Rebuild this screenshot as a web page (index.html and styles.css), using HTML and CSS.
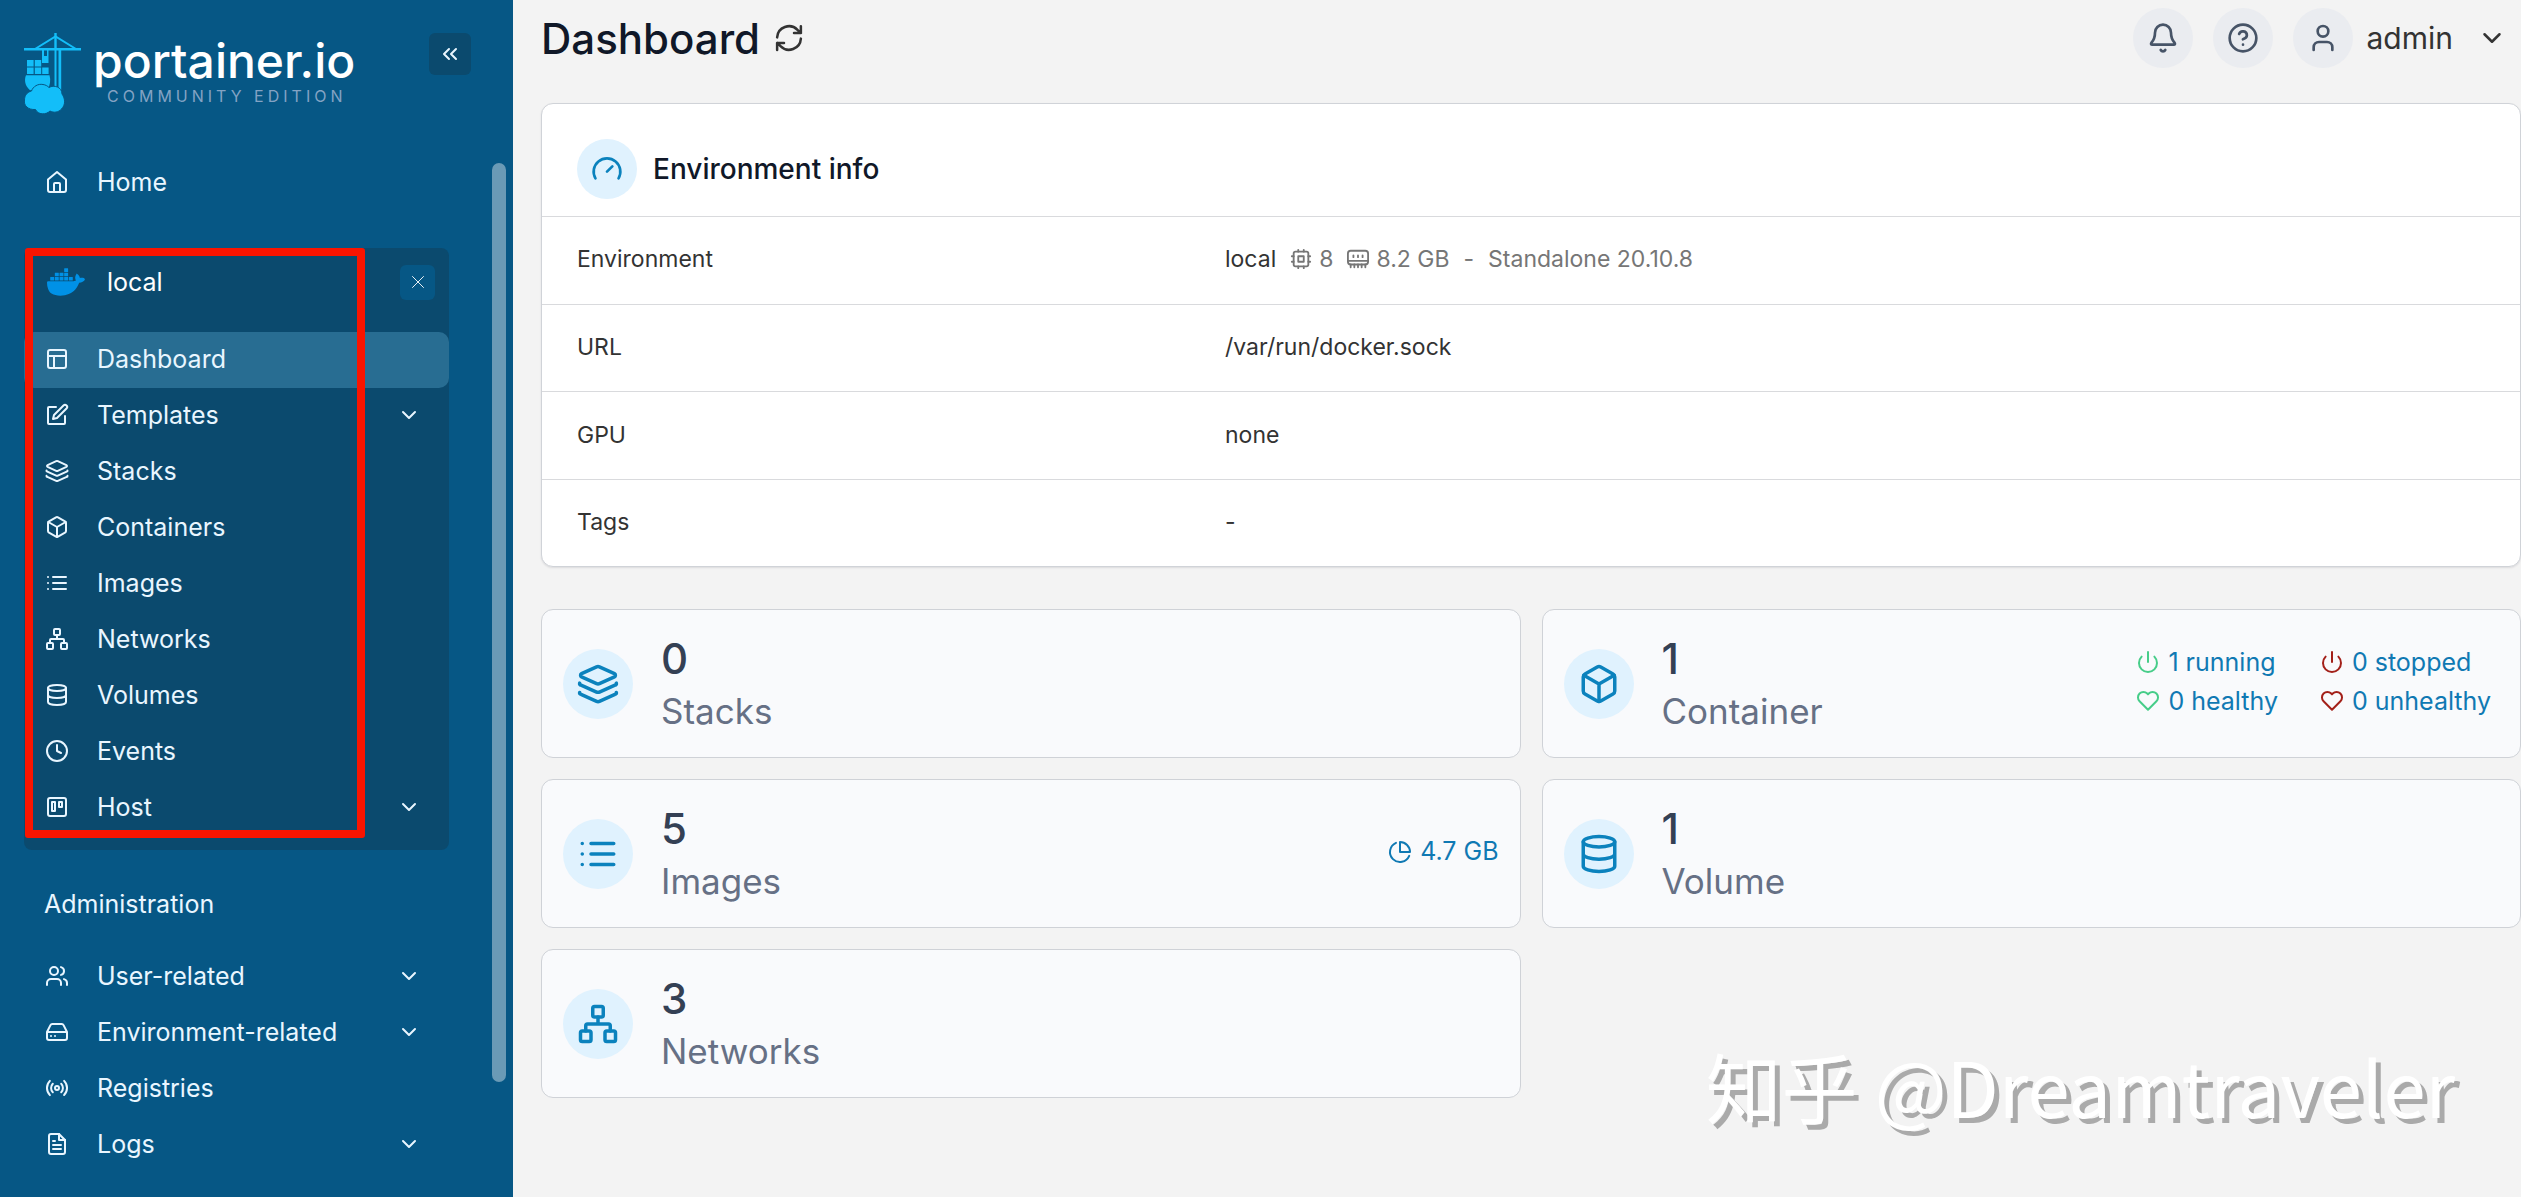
FILE: index.html
```html
<!DOCTYPE html>
<html lang="en">
<head>
<meta charset="utf-8">
<meta name="viewport" content="width=device-width, initial-scale=1">
<title>Portainer</title>
<link rel="stylesheet" href="styles.css">
</head>
<body>

<!-- icon set -->
<svg class="sprite" aria-hidden="true">
  <symbol id="home" viewBox="0 0 24 24"><path d="M3 9.5 12 2l9 7.5V20a2 2 0 0 1-2 2H5a2 2 0 0 1-2-2z"/><path d="M9 22v-8a1 1 0 0 1 1-1h4a1 1 0 0 1 1 1v8"/></symbol>
  <symbol id="layout" viewBox="0 0 24 24"><rect x="3" y="3" width="18" height="18" rx="2"/><path d="M3 9h18M9 21V9"/></symbol>
  <symbol id="edit" viewBox="0 0 24 24"><path d="M11 4H4a1 1 0 0 0-1 1v15a1 1 0 0 0 1 1h15a1 1 0 0 0 1-1v-7"/><path d="M18.5 2.5a2.12 2.12 0 0 1 3 3L12 15l-4 1 1-4z"/></symbol>
  <symbol id="layers" viewBox="0 0 24 24"><path d="M12.8 2.2a2 2 0 0 0-1.6 0L2.6 6.1a1 1 0 0 0 0 1.8l8.6 3.9a2 2 0 0 0 1.6 0l8.6-3.9a1 1 0 0 0 0-1.8z"/><path d="M1.5 11.5a1 1 0 0 0 .8 1.1l8.9 4a2 2 0 0 0 1.6 0l8.9-4a1 1 0 0 0 .8-1.1"/><path d="M1.5 16.8a1 1 0 0 0 .8 1.1l8.9 4a2 2 0 0 0 1.6 0l8.9-4a1 1 0 0 0 .8-1.1"/></symbol>
  <symbol id="box" viewBox="0 0 24 24"><path d="M21 16V8a2 2 0 0 0-1-1.73l-7-4a2 2 0 0 0-2 0l-7 4A2 2 0 0 0 3 8v8a2 2 0 0 0 1 1.73l7 4a2 2 0 0 0 2 0l7-4A2 2 0 0 0 21 16z"/><path d="M3.3 7 12 12l8.7-5M12 22V12"/></symbol>
  <symbol id="list" viewBox="0 0 24 24"><path d="M8 6h13M8 12h13M8 18h13M3 6h.01M3 12h.01M3 18h.01"/></symbol>
  <symbol id="network" viewBox="0 0 24 24"><rect x="16" y="16" width="6" height="6" rx="1"/><rect x="2" y="16" width="6" height="6" rx="1"/><rect x="9" y="2" width="6" height="6" rx="1"/><path d="M5 16v-3a1 1 0 0 1 1-1h12a1 1 0 0 1 1 1v3M12 12V8"/></symbol>
  <symbol id="database" viewBox="0 0 24 24"><ellipse cx="12" cy="5" rx="9" ry="3"/><path d="M3 5v14c0 1.66 4 3 9 3s9-1.34 9-3V5M3 12c0 1.66 4 3 9 3s9-1.34 9-3"/></symbol>
  <symbol id="clock" viewBox="0 0 24 24"><circle cx="12" cy="12" r="10"/><path d="M12 6v6l4 2"/></symbol>
  <symbol id="host" viewBox="0 0 24 24"><rect x="3" y="3" width="18" height="18" rx="2"/><path d="M7 7h3v9H7zM14 7h3v5h-3z"/></symbol>
  <symbol id="users" viewBox="0 0 24 24"><path d="M16 21v-2a4 4 0 0 0-4-4H6a4 4 0 0 0-4 4v2"/><circle cx="9" cy="7" r="4"/><path d="M22 21v-2a4 4 0 0 0-3-3.87M16 3.13a4 4 0 0 1 0 7.75"/></symbol>
  <symbol id="drive" viewBox="0 0 24 24"><path d="M22 12H2M5.45 5.11 2 12v6a2 2 0 0 0 2 2h16a2 2 0 0 0 2-2v-6l-3.45-6.89A2 2 0 0 0 16.76 4H7.24a2 2 0 0 0-1.79 1.11zM6 16h.01M10 16h.01"/></symbol>
  <symbol id="radio" viewBox="0 0 24 24"><path d="M4.9 19.1C1 15.2 1 8.8 4.9 4.9M7.8 16.2c-2.3-2.3-2.3-6.1 0-8.5M16.2 7.8c2.3 2.3 2.3 6.1 0 8.5M19.1 4.9C23 8.8 23 15.1 19.1 19"/><circle cx="12" cy="12" r="2"/></symbol>
  <symbol id="file" viewBox="0 0 24 24"><path d="M14 2H6a2 2 0 0 0-2 2v16a2 2 0 0 0 2 2h12a2 2 0 0 0 2-2V8z"/><path d="M14 2v6h6M16 13H8M16 17H8M10 9H8"/></symbol>
  <symbol id="down" viewBox="0 0 24 24"><path d="m6 9 6 6 6-6"/></symbol>
  <symbol id="collapse" viewBox="0 0 24 24"><path d="m11 17-5-5 5-5M18 17l-5-5 5-5"/></symbol>
  <symbol id="close" viewBox="0 0 24 24"><path d="M18 6 6 18M6 6l12 12"/></symbol>
  <symbol id="refresh" viewBox="0 0 24 24"><path d="M2.5 11.5A9.5 9.5 0 0 1 18.8 5.5L21.5 8M21.5 2.5V8H16M21.5 12.5A9.5 9.5 0 0 1 5.2 18.5L2.5 16M2.5 21.5V16H8"/></symbol>
  <symbol id="bell" viewBox="0 0 24 24"><path d="M6 8a6 6 0 0 1 12 0c0 3.500 1 5.500 2.600 7.500.7.900.4 1.500-.6 1.500H4c-1 0-1.300-.6-.6-1.500C5 13.500 6 11.500 6 8M10.300 21a1.940 1.940 0 0 0 3.400 0"/></symbol>
  <symbol id="help" viewBox="0 0 24 24"><circle cx="12" cy="12" r="10"/><path d="M9.090 9a3 3 0 0 1 5.830 1c0 2-3 3-3 3M12 17h.01"/></symbol>
  <symbol id="user" viewBox="0 0 24 24"><path d="M19 21v-2a4 4 0 0 0-4-4H9a4 4 0 0 0-4 4v2"/><circle cx="12" cy="7" r="4"/></symbol>
  <symbol id="gauge" viewBox="0 0 24 24"><path d="m12 14 4-4M3.340 19a10 10 0 1 1 17.320 0"/></symbol>
  <symbol id="cpu" viewBox="0 0 24 24"><rect x="4" y="4" width="16" height="16" rx="2"/><rect x="9" y="9" width="6" height="6"/><path d="M15 2v2M15 20v2M2 15h2M2 9h2M20 15h2M20 9h2M9 2v2M9 20v2"/></symbol>
  <symbol id="memory" viewBox="0 0 24 24"><rect x="1" y="3" width="22" height="15" rx="3"/><path d="M1 14h22M4 18v3M8 18v3M12 18v3M16 18v3M20 18v3M7 8v2M12 8v2M17 8v2"/></symbol>
  <symbol id="power" viewBox="0 0 24 24"><path d="M18.360 6.640a9 9 0 1 1-12.730 0M12 2v10"/></symbol>
  <symbol id="heart" viewBox="0 0 24 24"><path d="M20.420 4.580a5.400 5.400 0 0 0-7.650 0L12 5.350l-.770-.770a5.400 5.400 0 0 0-7.650 7.650L12 20.670l8.420-8.440a5.400 5.400 0 0 0 0-7.650z"/></symbol>
  <symbol id="pie" viewBox="0 0 24 24"><path d="M21.210 15.890A10 10 0 1 1 8 2.830M22 12A10 10 0 0 0 12 2v10z"/></symbol>
</svg>

<div class="page">

  <aside class="sidebar">
    <div class="brand">
      <svg class="crane" viewBox="0 0 57 81" aria-hidden="true">
        <path d="M0 15h57v2.500H0zM30.300 0h2.400v17h-2.400z"/>
        <path class="line" d="M11 16 31.500 3.500 52 16"/>
        <path d="M30.500 17h2v40h-2zM34.500 17h2.700v40h-2.700zM18 17h2v6h3v-6h1.500v13H18z"/>
        <path d="M3 27h6.600v6.500H3zM10.800 27h6.400v6.500h-6.400zM3 34.500h6.600V41H3zM10.800 34.500h6.400V41h-6.400zM18.200 34.500h6.400V41h-6.400z"/>
        <path d="M2 42.200h23.500c1.500 5 .5 10-2 15H6C1 53 0 47 2 42.200z"/>
        <path class="cloud" d="M7.500 58C9 53.500 14 50.500 19 51.500c2.500.3 4.500 1.500 6 3C30 51.500 38 54 38 61c3.500 5 3.500 11-.5 15-3 3.500-8 4-11.500 2-4 4-12 4-14.500-1.500C4 77-.5 72.500.5 67 .5 62 3.500 59 7.500 58z"/>
      </svg>
      <div class="brand-text">
        <span class="brand-name">portainer.io</span>
        <span class="brand-edition">COMMUNITY EDITION</span>
      </div>
      <button class="collapse" aria-label="Collapse sidebar"><svg class="icon"><use href="#collapse"/></svg></button>
    </div>

    <nav>
      <a class="nav-item" href="#"><svg class="icon"><use href="#home"/></svg>Home</a>

      <div class="env">
        <div class="env-title">
          <svg class="whale" viewBox="0 3 24 18" aria-hidden="true"><path d="M13.983 11.078h2.119a.186.186 0 00.186-.185V9.006a.186.186 0 00-.186-.186h-2.119a.185.185 0 00-.185.185v1.888c0 .102.083.185.185.185m-2.954-5.430h2.118a.186.186 0 00.186-.186V3.574a.186.186 0 00-.186-.185h-2.118a.185.185 0 00-.185.185v1.888c0 .102.082.185.185.185m0 2.716h2.118a.187.187 0 00.186-.186V6.290a.186.186 0 00-.186-.185h-2.118a.185.185 0 00-.185.185v1.887c0 .102.082.185.185.186m-2.930 0h2.120a.186.186 0 00.184-.186V6.290a.185.185 0 00-.185-.185H8.100a.185.185 0 00-.185.185v1.887c0 .102.083.185.185.186m-2.964 0h2.119a.186.186 0 00.185-.186V6.290a.185.185 0 00-.185-.185H5.136a.186.186 0 00-.186.185v1.887c0 .102.084.185.186.186m5.893 2.715h2.118a.186.186 0 00.186-.185V9.006a.186.186 0 00-.186-.186h-2.118a.185.185 0 00-.185.185v1.888c0 .102.082.185.185.185m-2.930 0h2.120a.185.185 0 00.184-.185V9.006a.185.185 0 00-.184-.186h-2.120a.185.185 0 00-.184.185v1.888c0 .102.083.185.185.185m-2.964 0h2.119a.185.185 0 00.185-.185V9.006a.185.185 0 00-.184-.186h-2.120a.186.186 0 00-.186.186v1.887c0 .102.084.185.186.185m-2.920 0h2.120a.185.185 0 00.184-.185V9.006a.185.185 0 00-.184-.186h-2.120a.185.185 0 00-.184.185v1.888c0 .102.083.185.185.185M23.763 9.890c-.065-.051-.672-.510-1.954-.510-.338.001-.676.030-1.010.087-.248-1.700-1.653-2.530-1.716-2.566l-.344-.199-.226.327c-.284.438-.490.922-.612 1.430-.230.970-.090 1.882.403 2.661-.595.332-1.550.413-1.744.420H.751a.751.751 0 00-.750.748 11.376 11.376 0 00.692 4.062c.545 1.428 1.355 2.480 2.410 3.124 1.180.723 3.100 1.137 5.275 1.137.983.003 1.963-.086 2.930-.266a12.248 12.248 0 003.823-1.389c.980-.567 1.860-1.288 2.610-2.136 1.252-1.418 1.998-2.997 2.553-4.400h.221c1.372 0 2.215-.549 2.680-1.009.309-.293.550-.650.707-1.046l.098-.288z"/></svg>
          <span>local</span>
          <button class="env-close" aria-label="Close environment"><svg class="icon"><use href="#close"/></svg></button>
        </div>
        <a class="nav-item active" href="#"><svg class="icon"><use href="#layout"/></svg>Dashboard</a>
        <button class="nav-item"><svg class="icon"><use href="#edit"/></svg>Templates<svg class="icon arrow"><use href="#down"/></svg></button>
        <a class="nav-item" href="#"><svg class="icon"><use href="#layers"/></svg>Stacks</a>
        <a class="nav-item" href="#"><svg class="icon"><use href="#box"/></svg>Containers</a>
        <a class="nav-item" href="#"><svg class="icon"><use href="#list"/></svg>Images</a>
        <a class="nav-item" href="#"><svg class="icon"><use href="#network"/></svg>Networks</a>
        <a class="nav-item" href="#"><svg class="icon"><use href="#database"/></svg>Volumes</a>
        <a class="nav-item" href="#"><svg class="icon"><use href="#clock"/></svg>Events</a>
        <button class="nav-item"><svg class="icon"><use href="#host"/></svg>Host<svg class="icon arrow"><use href="#down"/></svg></button>
        <div class="highlight"></div>
      </div>

      <h2 class="nav-heading">Administration</h2>
      <button class="nav-item"><svg class="icon"><use href="#users"/></svg>User-related<svg class="icon arrow"><use href="#down"/></svg></button>
      <button class="nav-item"><svg class="icon"><use href="#drive"/></svg>Environment-related<svg class="icon arrow"><use href="#down"/></svg></button>
      <a class="nav-item" href="#"><svg class="icon"><use href="#radio"/></svg>Registries</a>
      <button class="nav-item"><svg class="icon"><use href="#file"/></svg>Logs<svg class="icon arrow"><use href="#down"/></svg></button>
    </nav>
    <div class="scroll-thumb"></div>
  </aside>

  <main>
    <header class="topbar">
      <h1>Dashboard</h1>
      <button class="refresh" aria-label="Refresh"><svg class="icon"><use href="#refresh"/></svg></button>
      <div class="top-actions">
        <button class="round" aria-label="Notifications"><svg class="icon"><use href="#bell"/></svg></button>
        <button class="round" aria-label="Help"><svg class="icon"><use href="#help"/></svg></button>
        <button class="user-menu">
          <span class="round"><svg class="icon"><use href="#user"/></svg></span>
          admin
          <svg class="icon user-arrow"><use href="#down"/></svg>
        </button>
      </div>
    </header>

    <section class="widget">
      <div class="widget-header">
        <span class="widget-icon"><svg class="icon"><use href="#gauge"/></svg></span>
        <h2>Environment info</h2>
      </div>
      <table>
        <tr>
          <th scope="row">Environment</th>
          <td>
            <div class="env-info">
              <span>local</span>
              <span class="spec"><svg class="icon"><use href="#cpu"/></svg>8</span>
              <span class="spec"><svg class="icon"><use href="#memory"/></svg>8.2 GB</span>
              <span class="spec">-</span>
              <span class="spec">Standalone 20.10.8</span>
            </div>
          </td>
        </tr>
        <tr><th scope="row">URL</th><td>/var/run/docker.sock</td></tr>
        <tr><th scope="row">GPU</th><td>none</td></tr>
        <tr><th scope="row">Tags</th><td>-</td></tr>
      </table>
    </section>

    <section class="tiles">
      <a class="tile" href="#">
        <span class="tile-icon"><svg class="icon"><use href="#layers"/></svg></span>
        <span class="tile-text"><span class="count">0</span><span class="kind">Stacks</span></span>
      </a>
      <div class="tile">
        <span class="tile-icon"><svg class="icon"><use href="#box"/></svg></span>
        <span class="tile-text"><span class="count">1</span><span class="kind">Container</span></span>
        <div class="status">
          <a href="#"><svg class="icon ok"><use href="#power"/></svg>1 running</a>
          <a href="#"><svg class="icon bad"><use href="#power"/></svg>0 stopped</a>
          <a href="#"><svg class="icon ok"><use href="#heart"/></svg>0 healthy</a>
          <a href="#"><svg class="icon bad"><use href="#heart"/></svg>0 unhealthy</a>
        </div>
      </div>
      <a class="tile" href="#">
        <span class="tile-icon"><svg class="icon"><use href="#list"/></svg></span>
        <span class="tile-text"><span class="count">5</span><span class="kind">Images</span></span>
        <span class="disk"><svg class="icon"><use href="#pie"/></svg>4.7 GB</span>
      </a>
      <a class="tile" href="#">
        <span class="tile-icon"><svg class="icon"><use href="#database"/></svg></span>
        <span class="tile-text"><span class="count">1</span><span class="kind">Volume</span></span>
      </a>
      <a class="tile" href="#">
        <span class="tile-icon"><svg class="icon"><use href="#network"/></svg></span>
        <span class="tile-text"><span class="count">3</span><span class="kind">Networks</span></span>
      </a>
    </section>
  </main>

  <div class="watermark">知乎 @Dreamtraveler</div>
</div>

</body>
</html>
```

FILE: styles.css
```css
* {
  box-sizing: border-box;
}

body {
  margin: 0;
  font-family: Inter, "Noto Sans CJK SC", sans-serif;
  font-size: 25px;
  color: #333;
  background-color: #f3f3f3;
}

h1, h2 {
  margin: 0;
  font-weight: 500;
}

a {
  color: inherit;
  text-decoration: none;
}

button {
  padding: 0;
  border: none;
  background: none;
  color: inherit;
  font: inherit;
  cursor: pointer;
}

.sprite {
  display: none;
}

.icon {
  width: 24px;
  height: 24px;
  flex: none;
  fill: none;
  stroke: currentColor;
  stroke-width: 2;
  stroke-linecap: round;
  stroke-linejoin: round;
}

.page {
  position: relative;
  display: flex;
  min-height: 100vh;
}

/* Sidebar */
.sidebar {
  position: relative;
  flex: none;
  width: 513px;
  padding: 33px 64px 0 24px;
  background-color: #065785;
  color: #e9f6ff;
}

.brand {
  display: flex;
  height: 122px;
  margin-right: -22px;
}

.crane {
  width: 57px;
  height: 81px;
  fill: #13bef9;
}

.crane .line {
  fill: none;
  stroke: #13bef9;
  stroke-width: 2;
}

.crane .cloud {
  stroke: #065785;
  stroke-width: 1;
}

.brand-text {
  display: flex;
  flex-direction: column;
  margin-left: 12px;
}

.brand-name {
  color: #fff;
  font-size: 48px;
  font-weight: 500;
  line-height: 56px;
}

.brand-edition {
  padding-left: 14px;
  color: #83a3c4;
  font-size: 16px;
  line-height: 14px;
  letter-spacing: 4px;
}

.collapse {
  display: flex;
  align-items: center;
  justify-content: center;
  width: 42px;
  height: 42px;
  margin-left: auto;
  border-radius: 6px;
  background-color: #0b4a6e;
}

.nav-item {
  display: flex;
  align-items: center;
  gap: 28px;
  width: 100%;
  height: 56px;
  padding: 0 28px 2px 21px;
  border-radius: 10px;
  text-align: left;
}

.nav-item.active {
  background-color: #286d92;
}

.arrow {
  margin-left: auto;
}

.env {
  position: relative;
  margin-top: 37px;
  padding-bottom: 14px;
  border-radius: 8px;
  background-color: #0b4a6e;
}

.env-title {
  display: flex;
  align-items: center;
  height: 84px;
  padding: 0 14px 16px 23px;
  color: #fff;
}

.whale {
  width: 38px;
  height: 30px;
  margin-right: 22px;
  fill: #0091e6;
}

.env-close {
  display: flex;
  align-items: center;
  justify-content: center;
  width: 35px;
  height: 35px;
  margin-left: auto;
  border-radius: 6px;
  background-color: #065785;
}

.env-close .icon,
.env-info .icon {
  width: 22px;
  height: 22px;
}

.env-close .icon {
  stroke-width: 1;
}

/* red frame laid over the menu */
.highlight {
  position: absolute;
  top: 0;
  left: 1px;
  width: 340px;
  height: 590px;
  border: 8px solid #fa1400;
  border-radius: 3px;
  pointer-events: none;
}

.nav-heading {
  margin: 26px 0 17px;
  padding-left: 20px;
  font-size: 25px;
  font-weight: 400;
  line-height: 56px;
}

.scroll-thumb {
  position: absolute;
  top: 163px;
  right: 7px;
  bottom: 115px;
  width: 14px;
  border-radius: 7px;
  background-color: #6a9ab6;
}

/* Content */
main {
  flex: 1;
  padding-left: 28px;
}

.topbar {
  display: flex;
  align-items: center;
  height: 76px;
  margin-bottom: 27px;
}

.topbar h1 {
  color: #101828;
  font-size: 42px;
}

.refresh {
  display: flex;
  margin-left: 14px;
}

.refresh .icon {
  width: 30px;
  height: 30px;
}

.top-actions {
  display: flex;
  gap: 20px;
  margin-left: auto;
  padding-right: 14px;
}

.round,
.widget-icon {
  display: flex;
  align-items: center;
  justify-content: center;
  width: 60px;
  height: 60px;
  border-radius: 50%;
  background-color: #eaecf0;
  color: #475467;
}

.round .icon,
.widget-icon .icon {
  width: 32px;
  height: 32px;
}

.user-menu {
  display: flex;
  align-items: center;
  gap: 14px;
  font-size: 30px;
}

.user-menu .user-arrow {
  width: 30px;
  height: 30px;
  margin-left: 10px;
}

.widget {
  border: 1px solid #d0d3d8;
  border-radius: 12px;
  background-color: #fff;
  box-shadow: 0 1px 2px rgba(16, 24, 40, 0.1);
}

.widget-header {
  display: flex;
  align-items: center;
  gap: 16px;
  height: 112px;
  padding: 18px 35px 0;
}

.widget-header h2 {
  color: #101828;
  font-size: 28px;
}

.widget-icon,
.tile-icon {
  background-color: #e0f2fe;
  color: #0b82bd;
}

table {
  width: 100%;
  height: 350px;
  border-collapse: collapse;
}

th, td {
  padding: 0 35px 2px;
  border-top: 1px solid #d9dadd;
  font-size: 23px;
  font-weight: 400;
  text-align: left;
}

th {
  width: 648px;
}

.env-info {
  display: flex;
  align-items: center;
  gap: 14px;
}

.spec {
  display: flex;
  align-items: center;
  gap: 7px;
  color: #767676;
}

/* Tiles */
.tiles {
  display: grid;
  grid-template-columns: 1fr 1fr;
  gap: 21px;
  margin-top: 42px;
}

.tile {
  display: flex;
  align-items: center;
  height: 149px;
  padding: 0 21px;
  border: 1px solid #cfd2d7;
  border-radius: 12px;
  background-color: #f9fafc;
}

.tile-icon {
  display: flex;
  align-items: center;
  justify-content: center;
  width: 70px;
  height: 70px;
  margin-right: 28px;
  border-radius: 50%;
}

.tile-icon .icon {
  width: 42px;
  height: 42px;
}

.tile-text {
  display: flex;
  flex-direction: column;
  padding-top: 2px;
}

.count {
  color: #344054;
  font-size: 42px;
  font-weight: 500;
  line-height: 52px;
}

.kind {
  color: #667085;
  font-size: 35px;
  line-height: 52px;
}

.status {
  display: grid;
  grid-template-columns: auto auto;
  column-gap: 42px;
  margin: 0 8px 4px auto;
}

.status a,
.disk {
  display: flex;
  align-items: center;
  gap: 8px;
  color: #1079b3;
  line-height: 39px;
}

.disk {
  margin: 0 0 4px auto;
}

.status .ok {
  color: #47cd89;
}

.status .bad {
  color: #a32019;
}

.watermark {
  position: absolute;
  right: 66px;
  bottom: 57px;
  color: #fff;
  font-family: "Noto Sans CJK SC", sans-serif;
  font-size: 76px;
  line-height: 110px;
  text-shadow: 5px 5px 0 #aaa;
  white-space: nowrap;
}
```
